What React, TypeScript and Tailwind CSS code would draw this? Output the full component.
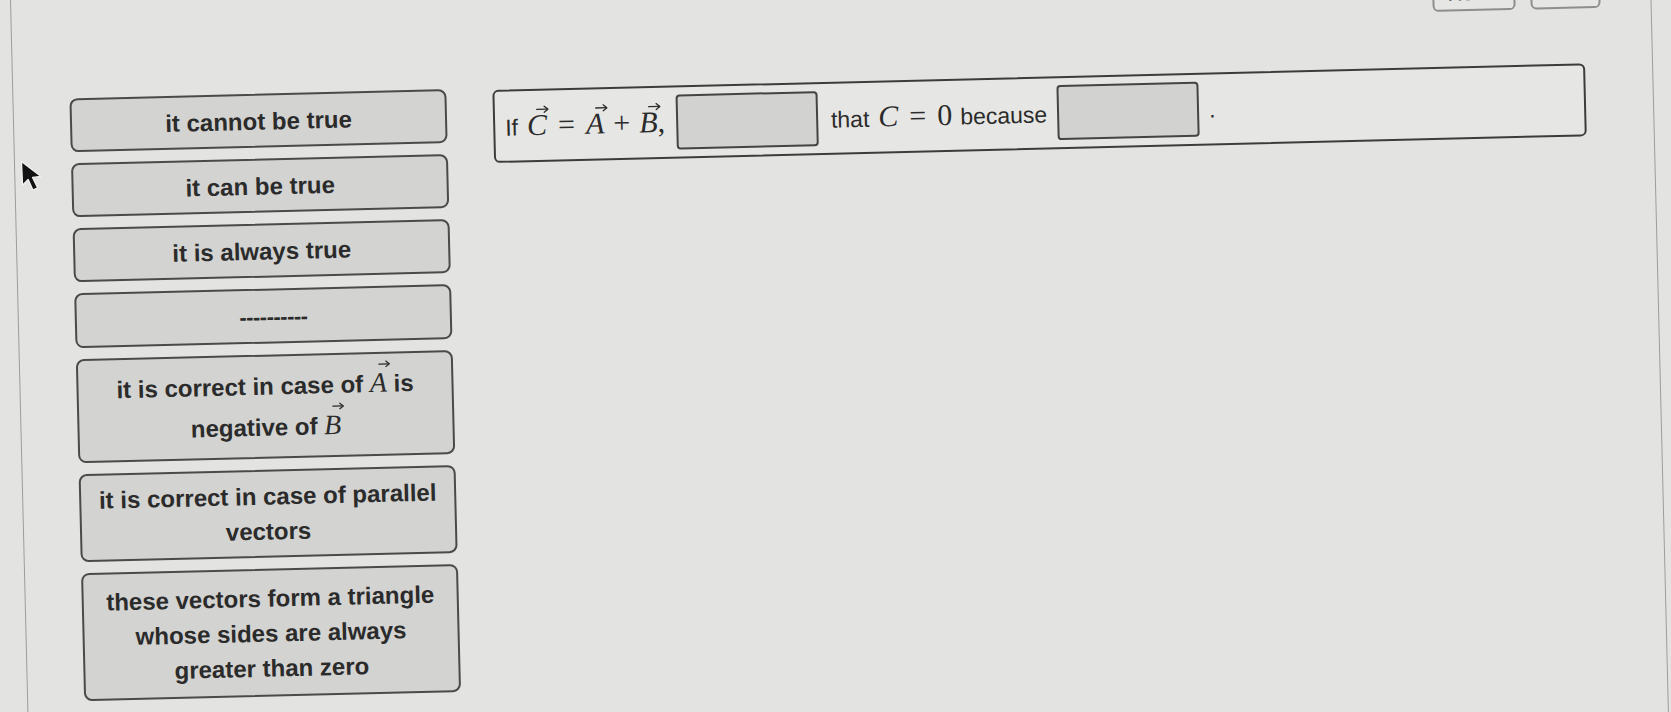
import React from "react";

// Small vector arrow drawn over a math letter
function Vec({ l }: { l: string }) {
  return (
    <span className="relative inline-block italic">
      {l}
      <svg
        className="absolute left-[0.3em] top-[-0.12em] h-[0.3em] w-[0.44em]"
        viewBox="0 0 12 8"
        fill="none"
        stroke="#2b2b2b"
        strokeWidth="1.2"
        strokeLinecap="round"
        strokeLinejoin="round"
      >
        <path d="M0.8 4H10.6" />
        <path d="M7.6 1.3L11 4L7.6 6.7" />
      </svg>
    </span>
  );
}

function Card({
  h,
  children,
  lead = "leading-[35px]",
}: {
  h: string;
  children: React.ReactNode;
  lead?: string;
}) {
  return (
    <div
      className={`flex w-[377px] items-center justify-center rounded-[8px] border-2 border-[#4a4a48] bg-[#d3d3d1] px-[12px] text-center font-['Liberation_Sans',Arial,sans-serif] text-[24px] font-bold text-[#2b2b2b] ${h} ${lead}`}
    >
      <div>{children}</div>
    </div>
  );
}

function Cursor() {
  return (
    <svg
      className="absolute left-[15px] top-[160px] h-[34px] w-[25px]"
      viewBox="0 0 20 27"
    >
      <path
        d="M2 1.5L2.4 20.5L7 16L10.6 24.5L14.4 22.8L10.6 14.4L17.4 13.8Z"
        fill="#121212"
        stroke="#f0f0f0"
        strokeWidth="1.1"
        strokeLinejoin="round"
      />
    </svg>
  );
}

export default function App() {
  return (
    <div className="h-[712px] w-full overflow-hidden bg-[#e3e3e1]">
      <div className="relative h-[790px] w-[1690px] origin-top-left -rotate-[1.4deg] bg-[#e3e3e1]">
        <Cursor />
        <div className="ml-[10px] h-full w-[1641px] border-x border-[#9d9d9b]">
          {/* toolbar */}
          <div className="flex h-[47px] items-end justify-end gap-[15px] pr-[50px]">
            <button className="flex h-[38px] w-[83px] items-end justify-center rounded-[6px] border-2 border-[#8e8e8c] bg-[#e6e6e4] pb-[4px] font-['Liberation_Sans',Arial,sans-serif] text-[20px] leading-[24px] text-[#333]">
              Reset
            </button>
            <button className="flex h-[40px] w-[70px] items-end justify-center rounded-[6px] border-2 border-[#8e8e8c] bg-[#e6e6e4] pb-[6px] font-['Liberation_Sans',Arial,sans-serif] text-[20px] leading-[24px] text-[#333]">
              Help
            </button>
          </div>

          <div className="mt-[53px] flex items-start gap-[46px] pl-[56px]">
            {/* answer choices */}
            <div className="flex flex-col gap-[11px]">
              <Card h="h-[54px]">it cannot be true</Card>
              <Card h="h-[54px]">it can be true</Card>
              <Card h="h-[54px]">it is always true</Card>
              <Card h="h-[55px]">
                <span className="ml-[20px] text-[22px] tracking-[-0.5px]">----------</span>
              </Card>
              <Card h="h-[104px]" lead="leading-[40px]">
                it is correct in case of{" "}
                <span className="font-['Liberation_Serif',serif] text-[28px] font-normal">
                  <Vec l="A" />
                </span>{" "}
                is
                <br />
                negative of{" "}
                <span className="font-['Liberation_Serif',serif] text-[28px] font-normal">
                  <Vec l="B" />
                </span>
              </Card>
              <Card h="h-[88px]">
                it is correct in case of parallel
                <br />
                vectors
              </Card>
              <Card h="h-[128px]">
                these vectors form a triangle
                <br />
                whose sides are always
                <br />
                greater than zero
              </Card>
            </div>

            {/* statement with drop targets */}
            <div className="mt-[2px] flex h-[73px] w-[1093px] items-center rounded-[6px] border-2 border-[#3c3c3a] bg-[#e6e6e4] pl-[10px] font-['Liberation_Sans',Arial,sans-serif] text-[23px] text-[#2b2b2b]">
              <span className="whitespace-nowrap leading-[32px]">
                If
                <span className="ml-[9px] font-['Liberation_Serif',serif] text-[30px]">
                  <Vec l="C" />
                  <span className="mx-[11px]">=</span>
                  <Vec l="A" />
                  <span className="mx-[9px]">+</span>
                  <Vec l="B" />
                  <span>,</span>
                </span>
              </span>
              <div className="ml-[11px] h-[55px] w-[142px] rounded-[4px] border-2 border-[#444442] bg-[#d2d2d0]" />
              <span className="ml-[13px] whitespace-nowrap leading-[32px]">
                that
                <span className="ml-[9px] font-['Liberation_Serif',serif] text-[30px]">
                  <span className="italic">C</span>
                  <span className="mx-[11px]">=</span>
                  <span>0</span>
                </span>
                <span className="ml-[8px]">because</span>
              </span>
              <div className="ml-[10px] h-[55px] w-[142px] rounded-[4px] border-2 border-[#444442] bg-[#d2d2d0]" />
              <span className="ml-[10px] leading-[32px]">.</span>
            </div>
          </div>
        </div>
      </div>
    </div>
  );
}
